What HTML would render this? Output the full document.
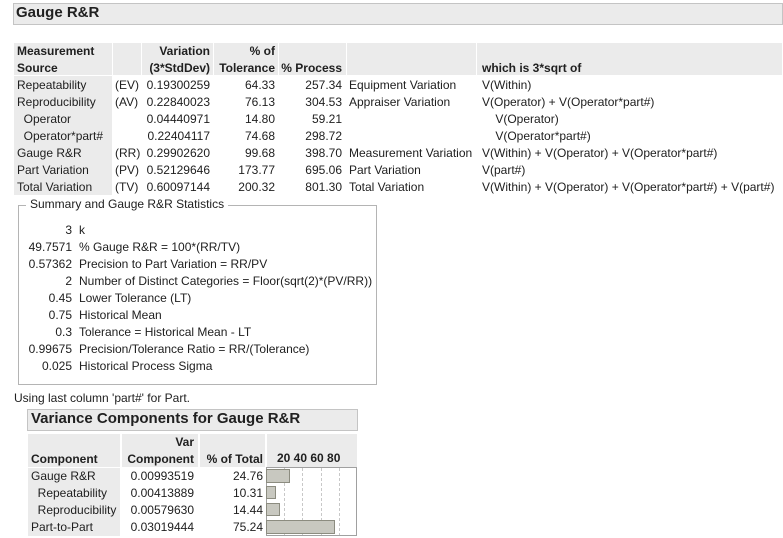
<!DOCTYPE html>
<html><head><meta charset="utf-8"><style>
body{margin:0;width:783px;height:538px;background:#fff;font-family:"Liberation Sans",sans-serif;font-size:12px;color:#202020;position:relative;overflow:hidden}
.a{position:absolute;white-space:nowrap;line-height:17px}
.r{text-align:right}
.g{position:absolute;background:#ebebeb}
.b{font-weight:bold}
</style></head><body>
<div class="g" style="left:13px;top:3px;width:768px;height:20px;border:1px solid #c4c4c4"></div>
<div class="a b" style="left:16px;top:4px;font-size:15px;line-height:18px">Gauge R&amp;R</div>

<div class="g" style="left:14px;top:43px;width:98px;height:32px"></div>
<div class="g" style="left:113px;top:43px;width:28px;height:32px"></div>
<div class="g" style="left:142px;top:43px;width:71px;height:32px"></div>
<div class="g" style="left:214px;top:43px;width:64px;height:32px"></div>
<div class="g" style="left:279px;top:43px;width:67px;height:32px"></div>
<div class="g" style="left:347px;top:43px;width:129px;height:32px"></div>
<div class="g" style="left:477px;top:43px;width:305px;height:32px"></div>
<div class="g" style="left:14px;top:76px;width:98px;height:119px"></div>

<div class="a b" style="left:17px;top:43px">Measurement<br>Source</div>
<div class="a b r" style="left:142px;top:43px;width:68px">Variation<br>(3*StdDev)</div>
<div class="a b r" style="left:214px;top:43px;width:61px">% of<br>Tolerance</div>
<div class="a b r" style="left:279px;top:60px;width:63px">% Process</div>
<div class="a b" style="left:482px;top:60px">which is 3*sqrt of</div>

<div class="a" style="left:17px;top:77px">Repeatability<br>Reproducibility<br>&nbsp; Operator<br>&nbsp; Operator*part#<br>Gauge R&amp;R<br>Part Variation<br>Total Variation</div>
<div class="a" style="left:115px;top:77px">(EV)<br>(AV)<br><br><br>(RR)<br>(PV)<br>(TV)</div>
<div class="a r" style="left:142px;top:77px;width:68px">0.19300259<br>0.22840023<br>0.04440971<br>0.22404117<br>0.29902620<br>0.52129646<br>0.60097144</div>
<div class="a r" style="left:214px;top:77px;width:61px">64.33<br>76.13<br>14.80<br>74.68<br>99.68<br>173.77<br>200.32</div>
<div class="a r" style="left:279px;top:77px;width:63px">257.34<br>304.53<br>59.21<br>298.72<br>398.70<br>695.06<br>801.30</div>
<div class="a" style="left:349px;top:77px">Equipment Variation<br>Appraiser Variation<br><br><br>Measurement Variation<br>Part Variation<br>Total Variation</div>
<div class="a" style="left:482px;top:77px">V(Within)<br>V(Operator) + V(Operator*part#)<br>&nbsp; &nbsp; V(Operator)<br>&nbsp; &nbsp; V(Operator*part#)<br>V(Within) + V(Operator) + V(Operator*part#)<br>V(part#)<br>V(Within) + V(Operator) + V(Operator*part#) + V(part#)</div>

<div style="position:absolute;left:18px;top:205px;width:357px;height:178px;border:1px solid #b4b4b4"></div>
<div class="a" style="left:26px;top:196px;background:#fff;padding:0 4px">Summary and Gauge R&amp;R Statistics</div>
<div class="a r" style="left:20px;top:222px;width:52px">3<br>49.7571<br>0.57362<br>2<br>0.45<br>0.75<br>0.3<br>0.99675<br>0.025</div>
<div class="a" style="left:79px;top:222px">k<br>% Gauge R&amp;R = 100*(RR/TV)<br>Precision to Part Variation = RR/PV<br>Number of Distinct Categories = Floor(sqrt(2)*(PV/RR))<br>Lower Tolerance (LT)<br>Historical Mean<br>Tolerance = Historical Mean - LT<br>Precision/Tolerance Ratio = RR/(Tolerance)<br>Historical Process Sigma</div>

<div class="a" style="left:14px;top:390px">Using last column 'part#' for Part.</div>
<div class="g" style="left:27px;top:409px;width:329px;height:20px;border:1px solid #c4c4c4"></div>
<div class="a b" style="left:31px;top:410px;font-size:15px;line-height:18px">Variance Components for Gauge R&amp;R</div>

<div class="g" style="left:28px;top:434px;width:92px;height:33px"></div>
<div class="g" style="left:122px;top:434px;width:76px;height:33px"></div>
<div class="g" style="left:200px;top:434px;width:65px;height:33px"></div>
<div class="g" style="left:267px;top:434px;width:90px;height:33px"></div>
<div class="g" style="left:28px;top:468px;width:92px;height:68px"></div>
<div class="a b" style="left:31px;top:451px">Component</div>
<div class="a b r" style="left:122px;top:434px;width:72px">Var<br>Component</div>
<div class="a b r" style="left:200px;top:451px;width:63px">% of Total</div>
<div class="a b" style="left:277px;top:450px">20 40 60 80</div>
<div class="a" style="left:31px;top:468px">Gauge R&amp;R<br>&nbsp; Repeatability<br>&nbsp; Reproducibility<br>Part-to-Part</div>
<div class="a r" style="left:122px;top:468px;width:72px">0.00993519<br>0.00413889<br>0.00579630<br>0.03019444</div>
<div class="a r" style="left:200px;top:468px;width:63px">24.76<br>10.31<br>14.44<br>75.24</div>
<svg style="position:absolute;left:266px;top:467px" width="92" height="70">
<rect x="0.5" y="0.5" width="90" height="68" fill="#fff" stroke="#a0a0a0"/>
<g stroke="#c8c8c8" stroke-dasharray="3,2"><line x1="18.5" y1="1" x2="18.5" y2="68"/><line x1="36.5" y1="1" x2="36.5" y2="68"/><line x1="55.5" y1="1" x2="55.5" y2="68"/><line x1="73.5" y1="1" x2="73.5" y2="68"/></g>
<g fill="#c8c8c0" stroke="#8c8c80"><rect x="0.5" y="2.5" width="23" height="13"/><rect x="0.5" y="19.5" width="9" height="12"/><rect x="0.5" y="36.5" width="13" height="12"/><rect x="0.5" y="53.5" width="68" height="13"/></g>
</svg>
</body></html>
